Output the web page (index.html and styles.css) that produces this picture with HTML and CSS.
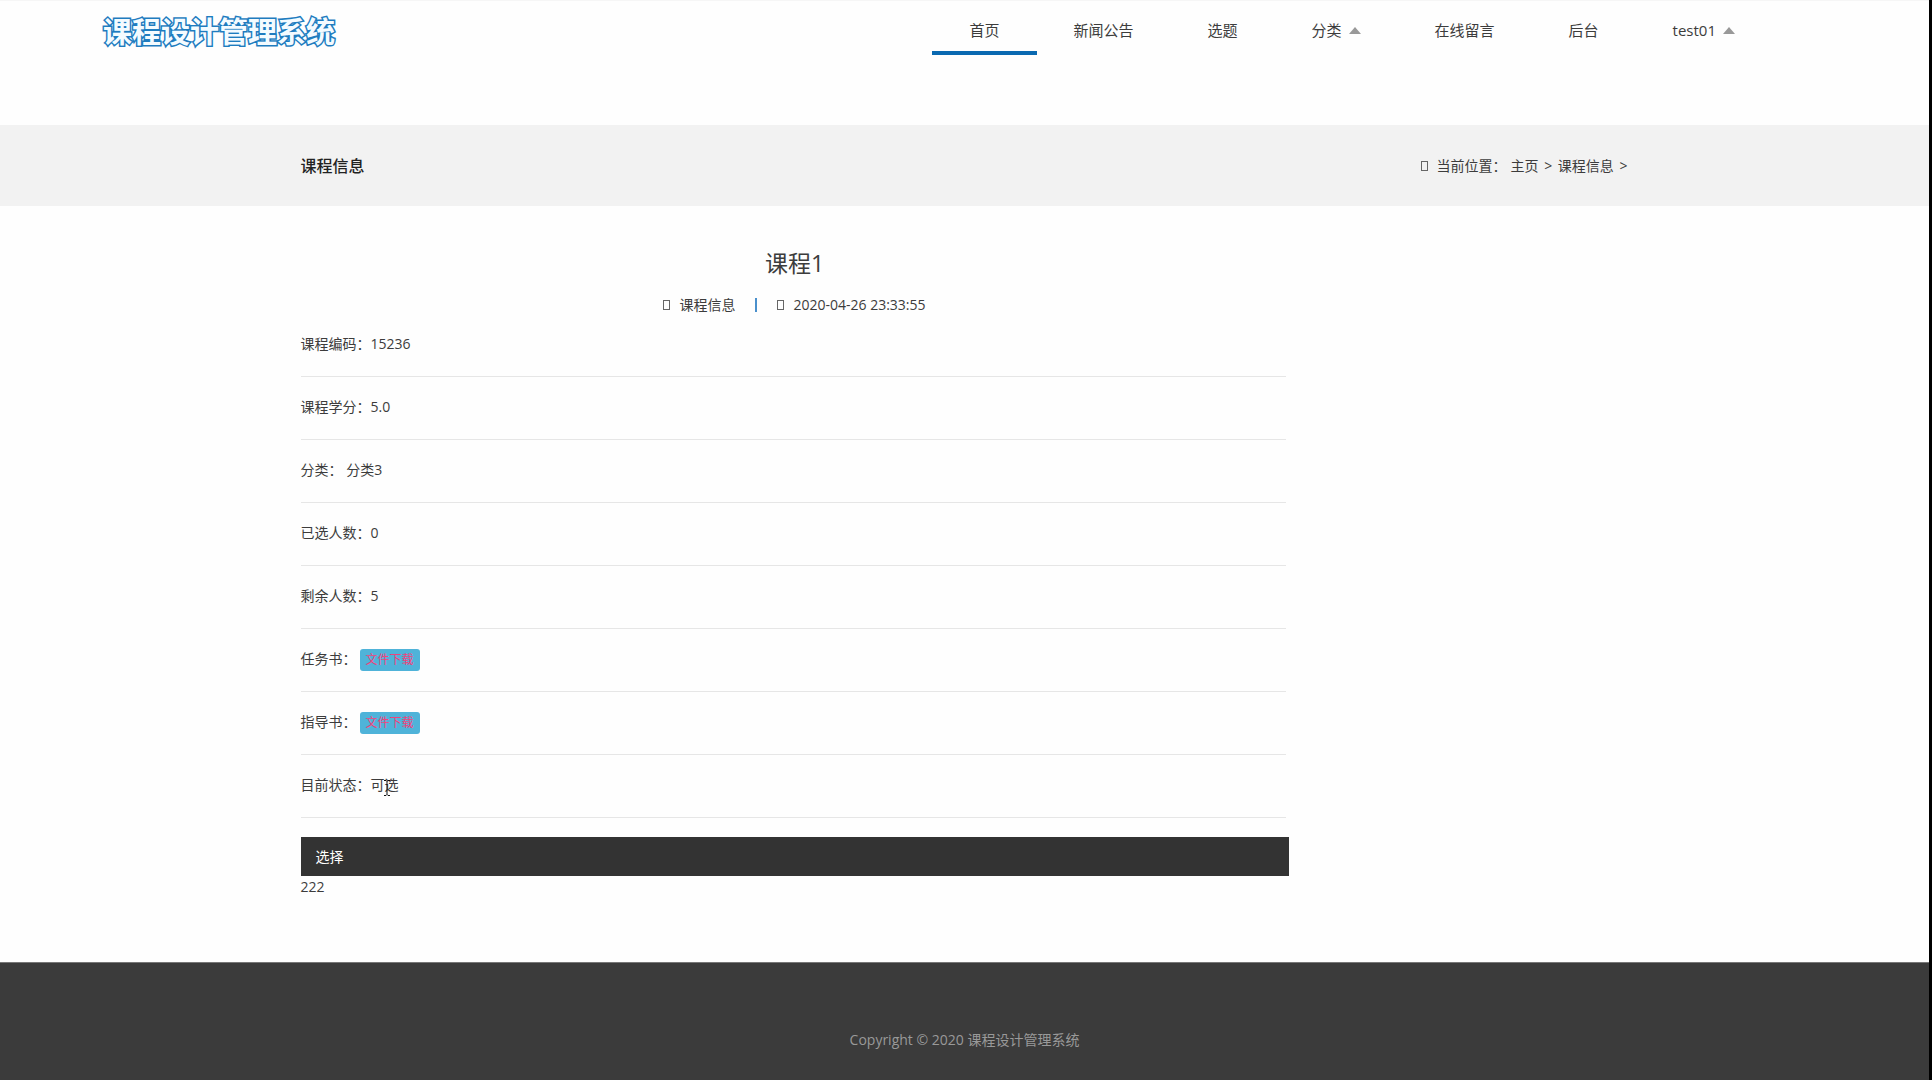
FILE: index.html
```
<!DOCTYPE html>
<html lang="zh-CN">
<head>
    <meta charset="utf-8">
    <meta name="viewport" content="width=device-width, initial-scale=1">
    <title>课程设计管理系统</title>
    <link rel="stylesheet" href="styles.css">
</head>
<body>
<header class="header">
    <a class="logo" href="#">课程设计管理系统</a>
    <nav>
        <ul class="menu">
            <li><a class="active" href="#">首页</a></li>
            <li><a href="#">新闻公告</a></li>
            <li><a href="#">选题</a></li>
            <li><a href="#">分类<i class="arrow"></i></a></li>
            <li><a href="#">在线留言</a></li>
            <li><a href="#">后台</a></li>
            <li><a href="#">test01<i class="arrow"></i></a></li>
        </ul>
    </nav>
</header>
<div class="banner">
    <div class="container banner-inner">
        <h2>课程信息</h2>
        <div class="crumbs"><i class="icon"></i><span>当前位置：</span><a href="#">主页</a> &gt; <a href="#">课程信息</a> &gt;</div>
    </div>
</div>
<main class="container">
    <article class="course">
        <h1>课程1</h1>
        <div class="meta">
            <i class="icon"></i><a href="#">课程信息</a>
            <i class="line"></i>
            <i class="icon"></i><span class="date">2020-04-26 23:33:55</span>
        </div>
        <ul class="info">
            <li>课程编码：15236</li>
            <li>课程学分：5.0</li>
            <li>分类： 分类3</li>
            <li>已选人数：0</li>
            <li>剩余人数：5</li>
            <li>任务书：<a class="download" href="#">文件下载</a></li>
            <li>指导书：<a class="download" href="#">文件下载</a></li>
            <li>目前状态：<span class="state">可选<svg class="cursor" width="8" height="16" viewBox="0 0 8 16"><path d="M1 .5h2l1 1 1-1h2M4 1.500v13M1 15.500h2l1-1 1 1h2" fill="none" stroke="#111"/></svg></span></li>
        </ul>
        <button class="choose" type="button">选择</button>
        <div class="content">222</div>
    </article>
</main>
<footer class="footer">
    <p>Copyright © 2020 课程设计管理系统</p>
</footer>
</body>
</html>
```
FILE: styles.css
```
* {
    box-sizing: border-box;
}

body {
    background-color: #fefefe;
    border-right: 3px solid #000;
    color: #3c3c3c;
    display: flex;
    flex-direction: column;
    font-family: "Open Sans", "Noto Sans CJK SC", sans-serif;
    font-size: 14px;
    line-height: 24px;
    margin: 0;
    min-height: 100vh;
}

h1, h2, p, ul {
    margin: 0;
    padding: 0;
}

ul {
    list-style: none;
}

a {
    color: inherit;
    text-decoration: none;
}

.container {
    margin: 0 auto;
    max-width: 1328px;
    width: 100%;
}

/* header */
.header {
    border-top: 1px solid #f6f6f6;
    display: flex;
    height: 125px;
    justify-content: space-between;
    padding: 0 157px 0 103px;
}

.logo {
    -webkit-text-stroke: 3px #1f7cbf;
    color: #f4fbff;
    font-size: 29px;
    font-weight: bold;
    line-height: 62px;
    paint-order: stroke fill;
    white-space: nowrap;
}

.menu {
    display: flex;
}

.menu a {
    align-items: center;
    border-bottom: 4px solid transparent;
    display: flex;
    font-size: 15px;
    gap: 7px;
    height: 54px;
    padding: 7px 37px 0;
    white-space: nowrap;
}

.menu a.active {
    border-color: #0a69b1;
}

.arrow {
    border: 6px solid transparent;
    border-bottom: 7px solid #999;
    border-top: 0;
    margin-top: 2px;
}

/* title bar */
.banner {
    background-color: #f2f2f2;
}

.banner-inner {
    align-items: center;
    display: flex;
    height: 81px;
    justify-content: space-between;
}

.banner h2 {
    color: #222;
    font-size: 16px;
    font-weight: 500;
}

.crumbs {
    padding-right: 1px;
}

.crumbs span {
    margin-right: 2px;
}

.crumbs a {
    margin: 0 2px;
}

.icon {
    border: 1px solid #666;
    display: inline-block;
    height: 10px;
    margin-right: 9px;
    width: 7px;
}

/* course */
.course {
    max-width: 988px;
    padding: 41px 0 64px;
}

.course h1 {
    font-size: 23px;
    font-weight: normal;
    line-height: 32px;
    text-align: center;
}

.meta {
    align-items: center;
    display: flex;
    justify-content: center;
    line-height: 24px;
    margin-top: 14px;
}

.line {
    background-color: #4a90cc;
    height: 14px;
    margin: 0 20px;
    width: 2px;
}

.info {
    margin: 0 3px 19px 0;
}

.info li {
    border-bottom: 1px solid #e6e6e6;
    padding: 18px 0 20px;
}

.info li:first-child {
    padding-top: 15px;
}

.download {
    background-color: #4fb3d9;
    border-radius: 3px;
    color: #f0437c;
    display: inline-block;
    font-size: 12px;
    line-height: 22px;
    margin: -1px 0 -1px 3px;
    padding: 0 6px;
    vertical-align: middle;
}

.state {
    position: relative;
}

.cursor {
    left: 12px;
    position: absolute;
    top: 5px;
}

.choose {
    background-color: #333;
    border: 0;
    color: #fff;
    display: block;
    font-family: inherit;
    font-size: 14px;
    height: 39px;
    padding: 0 15px 2px;
    text-align: left;
    width: 100%;
}

.content {
    line-height: 22px;
}

.footer {
    background-color: #3b3b3b;
    border-top: 1px solid #777;
    color: #999;
    flex-grow: 1;
    padding: 65px 0 28px;
    text-align: center;
}
```
